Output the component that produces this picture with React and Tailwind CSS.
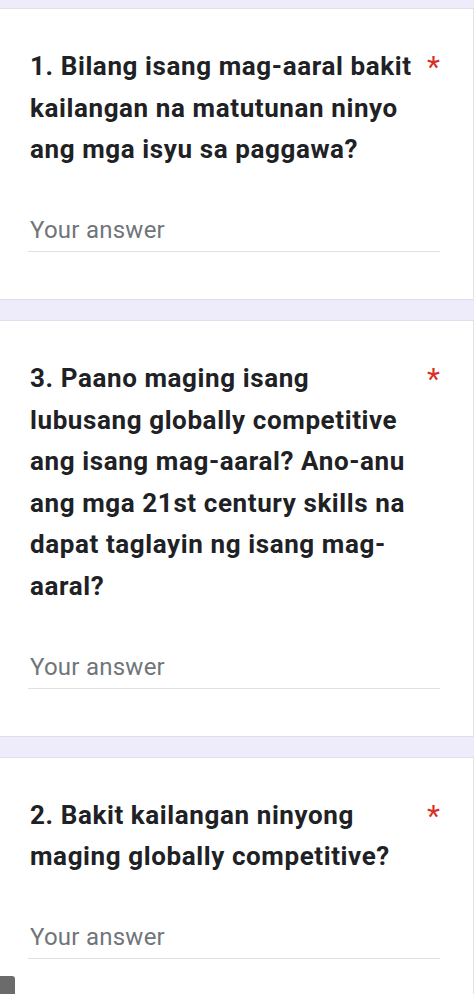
export default function App() {
  const questions = [
    { title: "1. Bilang isang mag-aaral bakit kailangan na matutunan ninyo ang mga isyu sa paggawa?" },
    { title: "3. Paano maging isang lubusang globally competitive ang isang mag-aaral? Ano-anu ang mga 21st century skills na dapat taglayin ng isang mag-aaral?" },
    { title: "2. Bakit kailangan ninyong maging globally competitive?" },
  ];
  return (
    <div
      className="relative w-[474px] h-[994px] overflow-hidden bg-white"
      style={{ fontFamily: "Roboto, 'Liberation Sans', sans-serif" }}
    >
      <div className="h-[9px] bg-[#eeebfb] border-b border-[#e1dfec]" />
      {questions.map((q, i) => (
        <div key={i}>
          {i > 0 && <div className="h-[22px] bg-[#eeebfb] border-y border-[#e1dfec]" />}
          <div className="bg-white border-r border-[#e3e3e3] pt-[37px] pb-[47px] pl-[30px] pr-[33px]">
            <div className="flex items-start">
              <div className="flex-1 text-[26px] leading-[41.5px] font-bold tracking-[0.6px] text-[#202124] pr-[10px]">
                {q.title}
              </div>
              <span className="text-[30px] leading-[41.5px] text-[#d93025] font-normal">*</span>
            </div>
            <div className="mt-[43.5px] -ml-[2px] border-b border-[#e0e0e0] pb-[5px] pl-[2px]">
              <div className="text-[24px] leading-[32px] tracking-[0.25px] text-[#70757a]">Your answer</div>
            </div>
          </div>
        </div>
      ))}
      <div className="absolute left-0 top-[976px] w-[15px] h-[18px] bg-[#6b6b6b] rounded-tr-[3px]" />
    </div>
  );
}
